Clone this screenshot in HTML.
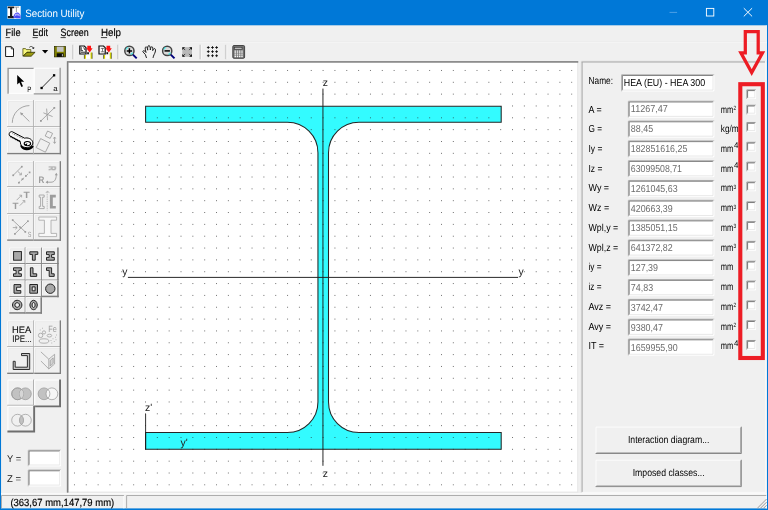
<!DOCTYPE html>
<html><head><meta charset="utf-8"><title>Section Utility</title>
<style>
html,body{margin:0;padding:0;background:#f0f0f0;overflow:hidden}
body{width:768px;height:510px;font-family:"Liberation Sans",sans-serif}
svg{display:block;position:absolute;left:0;top:0}
text{font-family:"Liberation Sans",sans-serif;white-space:pre;text-rendering:geometricPrecision}
</style></head><body>
<svg width="768" height="510" viewBox="0 0 768 510">
<defs><filter id="nf" color-interpolation-filters="sRGB"><feOffset dx="0" dy="0"/></filter></defs>

<rect x="0" y="0" width="768" height="510" fill="#0078d7"/>
<rect x="1.05" y="25.3" width="765.75" height="483.1" fill="#f0f0f0"/>
<!-- title bar -->
<g>
<rect x="7.4" y="6" width="13.3" height="12.8" fill="#fff"/>
<path d="M7.8 6.5h6.4v1.8h-2v7.7h2v2.2h-6.4v-2.2h2.2v-7.7h-2.2z" fill="#1c1c1c"/>
<path d="M14.4 7.1h4.6" stroke="#9a9a9a" stroke-width="1"/>
<path d="M16.4 7.1v5" stroke="#9a9a9a" stroke-width="1"/>
<path d="M13 17.4c0.8-3.4 3.4-5.6 5.4-4.6c1.2 0.7 2.3 2.2 2.3 4.2v1.2h-4z" fill="#4a4af5"/>
<path d="M14.2 16.6c1.2-1.8 3.2-2.4 5.4-0.8M15 14.8c1.6-1.2 3.4-0.8 4.8 0.4" stroke="#fff" stroke-width="0.55" fill="none"/>
</g>
<g filter="url(#nf)"><text x="25.2" y="16.8" font-size="10.6" fill="#fff" textLength="59.3" lengthAdjust="spacingAndGlyphs" >Section Utility</text></g>
<path d="M669.5 12.4h7.6" stroke="#4d9fe6" stroke-width="1"/>
<rect x="706.4" y="8.4" width="7.4" height="7.6" fill="none" stroke="#fff" stroke-width="0.9"/>
<path d="M743.8 8.2l8.3 8.2M752.1 8.2l-8.3 8.2" stroke="#fff" stroke-width="0.95" fill="none"/>
<!-- menu -->
<g filter="url(#nf)"><text x="5.6" y="36.2" font-size="10.6" fill="#000" textLength="15.0" lengthAdjust="spacingAndGlyphs" stroke="#000" stroke-width="0.18">File</text></g>
<path d="M5.6 37.6h4.3" stroke="#000" stroke-width="0.75"/>
<g filter="url(#nf)"><text x="32.6" y="36.2" font-size="10.6" fill="#000" textLength="15.4" lengthAdjust="spacingAndGlyphs" stroke="#000" stroke-width="0.18">Edit</text></g>
<path d="M32.6 37.6h5.2" stroke="#000" stroke-width="0.75"/>
<g filter="url(#nf)"><text x="60.6" y="36.2" font-size="10.6" fill="#000" textLength="28.1" lengthAdjust="spacingAndGlyphs" stroke="#000" stroke-width="0.18">Screen</text></g>
<path d="M60.6 37.6h5.2" stroke="#000" stroke-width="0.75"/>
<g filter="url(#nf)"><text x="100.9" y="36.2" font-size="10.6" fill="#000" textLength="20.1" lengthAdjust="spacingAndGlyphs" stroke="#000" stroke-width="0.18">Help</text></g>
<path d="M100.9 37.6h6.2" stroke="#000" stroke-width="0.75"/>
<path d="M1 42.6H766.8" stroke="#fbfbfb" stroke-width="0.9"/>
<path d="M1 41.9H766.8" stroke="#e9e9e9" stroke-width="0.6"/>
<!-- toolbar -->
<path d="M5.6 46.7H11.3L13.5 48.9V56.5H5.6z" fill="#fff" stroke="#111" stroke-width="0.95" stroke-linejoin="miter"/><path d="M11.3 46.7V48.9H13.5" fill="none" stroke="#111" stroke-width="0.8"/><path d="M22.9 56V48.6H25.5L26.3 49.6H30.8V52.3H27z" fill="#f7f77c" stroke="#3a3a00" stroke-width="0.7" stroke-linejoin="round"/><path d="M23.2 56.2L27 52.3H35.1L31.2 56.2z" fill="#9a9a10" stroke="#2c2c00" stroke-width="0.8" stroke-linejoin="round"/><path d="M29.3 47.4C30.6 45.9 32.6 46.2 33.6 48.3" fill="none" stroke="#222" stroke-width="0.8"/><path d="M34.4 46.9L33.9 49.1L31.9 48.3z" fill="#222"/><path d="M42 50.1H48.2L45.1 53.5z" fill="#000"/><rect x="54.4" y="46.4" width="11.2" height="10.5" fill="#808000" stroke="#2a2a00" stroke-width="0.7"/><rect x="56.8" y="46.7" width="6.8" height="5.1" fill="#c4c4c4"/><rect x="56.8" y="53.3" width="6.8" height="3.6" fill="#0a0a0a"/><rect x="61.9" y="54.1" width="0.9" height="2.2" fill="#d0d0d0"/><g transform="translate(0,0)"><path d="M85 55.2H91.6V58.8H85z" fill="#fff"/><path d="M85.25 55V58.8M91.25 52.6V58.8" stroke="#e2e200" stroke-width="1.4"/><path d="M84.4 55V58.8M92.1 52.6V58.8" stroke="#33330a" stroke-width="0.7"/><path d="M79.8 46H84.3L86 47.7V54H79.8z" fill="#fff" stroke="#0c0c0c" stroke-width="1.2" stroke-linejoin="miter"/><path d="M81.2 47.2v3.4h1.8M83.6 47.4l1.4 2.6" stroke="#222" stroke-width="0.9" fill="none"/><path d="M81 52.2h4.4" stroke="#111" stroke-width="0.9"/><path d="M87.3 45.8H91V48.3H92.6L89.7 52.6L86.3 48.3H87.3z" fill="#ff1212"/><path d="M87.2 52.2H88.9V54.2H87.2z" fill="#111"/></g><g transform="translate(19.2,0)"><path d="M85 55.2H91.6V58.8H85z" fill="#fff"/><path d="M85.25 55V58.8M91.25 52.6V58.8" stroke="#e2e200" stroke-width="1.4"/><path d="M84.4 55V58.8M92.1 52.6V58.8" stroke="#33330a" stroke-width="0.7"/><path d="M79.8 46H84.3L86 47.7V54H79.8z" fill="#fff" stroke="#0c0c0c" stroke-width="1.2" stroke-linejoin="miter"/><path d="M81.6 48.4h3.4M83.3 48.4v3.2M81.6 51.8h3.4" stroke="#444" stroke-width="0.7" fill="none"/><path d="M87.3 45.8H91V48.3H92.6L89.7 52.6L86.3 48.3H87.3z" fill="#ff1212"/><path d="M87.2 52.2H88.9V54.2H87.2z" fill="#111"/></g><path d="M132.70000000000002 54.4L136.70000000000002 58.4" stroke="#00007a" stroke-width="1.9" stroke-linecap="butt"/><circle cx="129.4" cy="50.9" r="4.6" fill="#dadada" stroke="#444" stroke-width="1.5"/><path d="M126.0 49.4A3.6 3.6 0 0 1 128.20000000000002 47.5" stroke="#48ecec" stroke-width="1.25" fill="none"/><path d="M132.70000000000002 52.6A3.6 3.6 0 0 1 130.6 54.4" stroke="#48ecec" stroke-width="1.25" fill="none"/><path d="M126.7 50.9H132.1M129.4 48.2V53.6" stroke="#000" stroke-width="1.45"/><path d="M170.5 54.4L174.5 58.4" stroke="#00007a" stroke-width="1.9" stroke-linecap="butt"/><circle cx="167.2" cy="50.9" r="4.6" fill="#dadada" stroke="#444" stroke-width="1.5"/><path d="M163.79999999999998 49.4A3.6 3.6 0 0 1 166.0 47.5" stroke="#48ecec" stroke-width="1.25" fill="none"/><path d="M170.5 52.6A3.6 3.6 0 0 1 168.39999999999998 54.4" stroke="#48ecec" stroke-width="1.25" fill="none"/><path d="M164.5 50.9H169.89999999999998" stroke="#000" stroke-width="1.5"/><path d="M146.4 57.6L145.3 54.4C144.4 53.2 143.2 52.6 142.8 51.6C142.9 50.5 144.1 50.4 144.9 51.2L146 52.5L145.3 49.2C144.9 47.6 145.6 46.5 146.5 46.9C147.2 47.3 147.4 48.6 147.7 50.2C147.5 48.2 147.6 45.6 148.9 45.5C150.1 45.5 150.3 47.8 150.3 50C150.6 48 151 46.5 152 46.7C153 47 152.9 48.8 152.7 50.6C153.3 49.2 154 48.2 154.8 48.6C155.7 49.2 155.6 50.6 155.2 52C154.7 53.8 153.4 55.4 153.1 57.5" fill="#f3f3f3" stroke="#1c1c1c" stroke-width="1" stroke-linejoin="round" stroke-linecap="round"/><rect x="182.3" y="47.2" width="9.7" height="9.6" fill="#b9b9b9"/><path d="M182.3 47.2h2.8l-2.8 2.8zM192 47.2v2.8l-2.8-2.8zM182.3 56.8v-2.8l2.8 2.8zM192 56.8h-2.8l2.8-2.8z" fill="#111"/><path d="M183 47.9l2.2 2.2M191.3 47.9l-2.2 2.2M183 56.1l2.2-2.2M191.3 56.1l-2.2-2.2" stroke="#222" stroke-width="0.8"/><path d="M206.90 47.5h2.8M208.3 46.10v2.8M206.90 51.6h2.8M208.3 50.20v2.8M206.90 55.7h2.8M208.3 54.30v2.8M211.10 47.5h2.8M212.5 46.10v2.8M211.10 51.6h2.8M212.5 50.20v2.8M211.10 55.7h2.8M212.5 54.30v2.8M215.20 47.5h2.8M216.6 46.10v2.8M215.20 51.6h2.8M216.6 50.20v2.8M215.20 55.7h2.8M216.6 54.30v2.8" stroke="#000" stroke-width="0.8"/><rect x="232.8" y="45.5" width="11.8" height="12.8" rx="1.2" fill="#707070" stroke="#3a3a3a" stroke-width="0.9"/><rect x="234.6" y="47.4" width="7.4" height="1.8" fill="#c4c4c4" stroke="#2a2a2a" stroke-width="0.5"/><path d="M234.50 50.50h1.5v1.2h-1.5zM234.50 52.35h1.5v1.2h-1.5zM234.50 54.20h1.5v1.2h-1.5zM234.50 56.05h1.5v1.2h-1.5zM236.75 50.50h1.5v1.2h-1.5zM236.75 52.35h1.5v1.2h-1.5zM236.75 54.20h1.5v1.2h-1.5zM236.75 56.05h1.5v1.2h-1.5zM239.00 50.50h1.5v1.2h-1.5zM239.00 52.35h1.5v1.2h-1.5zM239.00 54.20h1.5v1.2h-1.5zM239.00 56.05h1.5v1.2h-1.5zM241.25 50.50h1.5v1.2h-1.5zM241.25 52.35h1.5v1.2h-1.5zM241.25 54.20h1.5v1.2h-1.5zM241.25 56.05h1.5v1.2h-1.5z" fill="#f4f4f4"/>
<path d="M72.8 44.8v14.4" stroke="#d0d0d0" stroke-width="1.6"/><path d="M73.95 44.8v14.4" stroke="#fafafa" stroke-width="0.7"/>
<path d="M117.8 44.8v14.4" stroke="#d0d0d0" stroke-width="1.6"/><path d="M118.95 44.8v14.4" stroke="#fafafa" stroke-width="0.7"/>
<path d="M200.2 44.8v14.4" stroke="#d0d0d0" stroke-width="1.6"/><path d="M201.35 44.8v14.4" stroke="#fafafa" stroke-width="0.7"/>
<path d="M225.7 44.8v14.4" stroke="#d0d0d0" stroke-width="1.6"/><path d="M226.85 44.8v14.4" stroke="#fafafa" stroke-width="0.7"/>
<!-- canvas -->
<rect x="66.9" y="61.2" width="511.30" height="431.40" fill="#e6e6e6"/>
<path d="M66.9 492.6V61.2H578.2V62.9H68.8V492.6z" fill="#a4a4a4"/>
<path d="M66.9 492.6V61.2H578.2V62.25H68.0V492.6z" fill="#808080"/>
<rect x="68.8" y="62.9" width="508.40000000000003" height="428.70000000000005" fill="#fff"/>
<path d="M145.60 106.15H501.20V122.30H359.00A30.50 30.50 0 0 0 328.50 152.80V402.05A30.50 30.50 0 0 0 359.00 432.55H501.20V449.30H145.60V432.55H287.45A30.50 30.50 0 0 0 317.95 402.05V152.80A30.50 30.50 0 0 0 287.45 122.30H145.60z" fill="#33fbff"/>
<defs><pattern id="dots" x="73.95" y="69.95" width="11.84" height="11.84" patternUnits="userSpaceOnUse"><rect x="0" y="0" width="0.9" height="0.9" fill="#222" opacity="0.8"/></pattern></defs>
<defs><clipPath id="dc"><path clip-rule="evenodd" d="M0 0H768V510H0zM144.6 105H502.2V107H144.6zM499.8 106.15H502V122.3H499.8zM499.8 432.55H502V449.3H499.8z"/></clipPath></defs>
<rect x="73.4" y="69.4" width="499.28" height="416.40" fill="url(#dots)" clip-path="url(#dc)"/>
<path d="M145.60 106.15H501.20V122.30H359.00A30.50 30.50 0 0 0 328.50 152.80V402.05A30.50 30.50 0 0 0 359.00 432.55H501.20V449.30H145.60V432.55H287.45A30.50 30.50 0 0 0 317.95 402.05V152.80A30.50 30.50 0 0 0 287.45 122.30H145.60z" fill="none" stroke="#262626" stroke-width="1.05"/>
<path d="M127.9 277.4H518.1M322.95 88.6V465.8" stroke="#1c1c1c" stroke-width="0.95" fill="none"/>
<path d="M145.60 413.9V449.30" stroke="#1c1c1c" stroke-width="0.9" fill="none"/>
<g filter="url(#nf)"><text x="122.3" y="274.6" font-size="10.4" fill="#222" >y</text></g>
<g filter="url(#nf)"><text x="518.4" y="274.6" font-size="10.4" fill="#222" >y</text></g>
<g filter="url(#nf)"><text x="322.7" y="85.7" font-size="10.4" fill="#222" >z</text></g>
<g filter="url(#nf)"><text x="322.7" y="476.7" font-size="10.4" fill="#222" >z</text></g>
<g filter="url(#nf)"><text x="145.0" y="410.8" font-size="10.4" fill="#222" >z'</text></g>
<g filter="url(#nf)"><text x="180.6" y="446.2" font-size="10.4" fill="#222" >y'</text></g>
<!-- left panel -->
<rect x="7.40" y="67.70" width="26.40" height="26.10" fill="#f8f8f8"/><path d="M8.10 93.80V68.40H33.80" fill="none" stroke="#969696" stroke-width="1.4"/><path d="M8.80 93.30H33.30V69.10" fill="none" stroke="#ffffff" stroke-width="1"/><rect x="33.80" y="67.70" width="27.00" height="26.90" fill="#f0f0f0"/><path d="M34.30 94.10V68.20H60.30" fill="none" stroke="#ffffff" stroke-width="1"/><path d="M33.80 93.95H60.15V67.70" fill="none" stroke="#969696" stroke-width="1.3"/><path d="M17.2 74.9V84.5L19.4 82.4L21.4 87L23 86.3L21 81.8H24.2z" fill="#000"/><g filter="url(#nf)"><text x="27.3" y="92" font-size="7.8" fill="#000" textLength="4.1" lengthAdjust="spacingAndGlyphs" >P</text></g><path d="M41.6 88L54.1 75.3" stroke="#1a1a1a" stroke-width="0.9"/><rect x="40.45" y="86.85" width="2.3" height="2.3" fill="#000"/><rect x="52.95" y="74.15" width="2.3" height="2.3" fill="#000"/><g filter="url(#nf)"><text x="53.2" y="90.9" font-size="7.4" fill="#000" textLength="4.4" lengthAdjust="spacingAndGlyphs" >a</text></g><rect x="7.20" y="100.20" width="26.75" height="26.95" fill="#f0f0f0"/><path d="M7.65 126.20V100.65H33.00" fill="none" stroke="#fbfbfb" stroke-width="0.9"/><path d="M8.50 126.20V101.50H33.00" fill="none" stroke="#e9e9e9" stroke-width="0.8"/><path d="M7.20 126.68H33.95" fill="none" stroke="#ababab" stroke-width="0.95"/><path d="M33.48 100.20V127.15" fill="none" stroke="#ababab" stroke-width="0.95"/><rect x="33.95" y="100.20" width="27.05" height="26.95" fill="#f0f0f0"/><path d="M34.40 126.20V100.65H59.65" fill="none" stroke="#fbfbfb" stroke-width="0.9"/><path d="M35.25 126.20V101.50H59.65" fill="none" stroke="#e9e9e9" stroke-width="0.8"/><path d="M33.95 126.68H61.00" fill="none" stroke="#ababab" stroke-width="0.95"/><path d="M60.33 100.20V127.15" fill="none" stroke="#7e7e7e" stroke-width="1.35"/><rect x="7.20" y="127.15" width="26.75" height="27.10" fill="#f0f0f0"/><path d="M7.65 152.90V127.60H33.00" fill="none" stroke="#fbfbfb" stroke-width="0.9"/><path d="M8.50 152.90V128.45H33.00" fill="none" stroke="#e9e9e9" stroke-width="0.8"/><path d="M7.20 153.57H33.95" fill="none" stroke="#7e7e7e" stroke-width="1.35"/><path d="M33.48 127.15V154.25" fill="none" stroke="#ababab" stroke-width="0.95"/><rect x="33.95" y="127.15" width="27.05" height="27.10" fill="#f0f0f0"/><path d="M34.40 152.90V127.60H59.65" fill="none" stroke="#fbfbfb" stroke-width="0.9"/><path d="M35.25 152.90V128.45H59.65" fill="none" stroke="#e9e9e9" stroke-width="0.8"/><path d="M33.95 153.57H61.00" fill="none" stroke="#7e7e7e" stroke-width="1.35"/><path d="M60.33 127.15V154.25" fill="none" stroke="#7e7e7e" stroke-width="1.35"/><path d="M12.3 122.8A17.2 17.2 0 0 1 29.4 105.6" fill="none" stroke="#9c9c9c" stroke-width="0.9"/><path d="M29.4 121.5L20.6 112.8" stroke="#9c9c9c" stroke-width="0.9"/><path d="M20.2 112.4L23.4 113.2L21 115.6z" fill="#9c9c9c"/><path d="M40.9 120.9L54.3 107.9M46.6 108.6L47.6 120.2M43.4 112.8L52.6 116.6" stroke="#9c9c9c" stroke-width="0.85" fill="none"/><rect x="40.00" y="120.00" width="1.8" height="1.8" fill="#9c9c9c"/><rect x="53.40" y="107.00" width="1.8" height="1.8" fill="#9c9c9c"/><g><path d="M21.2 145.2C22.4 149.6 29.6 150.6 32.8 145.8" fill="none" stroke="#000" stroke-width="2.4"/><path d="M12.4 131.8C10.4 130.9 8.2 133.6 9.6 135.8L20.4 141.6C20.2 143.4 20.8 145 22.2 146.2C25 148.4 30.2 148 32.2 145C33.6 142.6 32.4 139.8 29.6 138.6C27.8 137.8 26 137.8 24.6 138.2z" fill="#fafafa" stroke="#000" stroke-width="1" stroke-linejoin="round"/><path d="M10.4 136.4L20.4 141.8" stroke="#000" stroke-width="1.5" stroke-dasharray="1.3 0.6"/><path d="M12.4 133.6L22.6 138.6" stroke="#000" stroke-width="0.5" stroke-dasharray="1 0.8"/><ellipse cx="27.4" cy="143.6" rx="3.2" ry="2.1" fill="#fff" stroke="#000" stroke-width="1.1"/><path d="M24.6 144.6L27.4 143.2L26.8 145.4z" fill="#000"/></g><g fill="none" stroke="#9c9c9c" stroke-width="0.85"><path d="M40.6 138.6L49.8 143.2L45.4 152.2L36.2 147.6z"/><path d="M47.6 131L52.6 133.4L50.2 138.4L45.2 136z"/><path d="M54.6 137.2V143.2M53.4 138.6L54.6 137L55.8 138.6M53.4 141.8L54.6 143.4L55.8 141.8"/></g><rect x="7.20" y="161.20" width="26.75" height="25.90" fill="#f0f0f0"/><path d="M7.65 186.15V161.65H33.00" fill="none" stroke="#fbfbfb" stroke-width="0.9"/><path d="M8.50 186.15V162.50H33.00" fill="none" stroke="#e9e9e9" stroke-width="0.8"/><path d="M7.20 186.62H33.95" fill="none" stroke="#ababab" stroke-width="0.95"/><path d="M33.48 161.20V187.10" fill="none" stroke="#ababab" stroke-width="0.95"/><rect x="33.95" y="161.20" width="27.05" height="25.90" fill="#f0f0f0"/><path d="M34.40 186.15V161.65H59.65" fill="none" stroke="#fbfbfb" stroke-width="0.9"/><path d="M35.25 186.15V162.50H59.65" fill="none" stroke="#e9e9e9" stroke-width="0.8"/><path d="M33.95 186.62H61.00" fill="none" stroke="#ababab" stroke-width="0.95"/><path d="M60.33 161.20V187.10" fill="none" stroke="#7e7e7e" stroke-width="1.35"/><rect x="7.20" y="187.10" width="26.75" height="27.00" fill="#f0f0f0"/><path d="M7.65 213.15V187.55H33.00" fill="none" stroke="#fbfbfb" stroke-width="0.9"/><path d="M8.50 213.15V188.40H33.00" fill="none" stroke="#e9e9e9" stroke-width="0.8"/><path d="M7.20 213.62H33.95" fill="none" stroke="#ababab" stroke-width="0.95"/><path d="M33.48 187.10V214.10" fill="none" stroke="#ababab" stroke-width="0.95"/><rect x="33.95" y="187.10" width="27.05" height="27.00" fill="#f0f0f0"/><path d="M34.40 213.15V187.55H59.65" fill="none" stroke="#fbfbfb" stroke-width="0.9"/><path d="M35.25 213.15V188.40H59.65" fill="none" stroke="#e9e9e9" stroke-width="0.8"/><path d="M33.95 213.62H61.00" fill="none" stroke="#ababab" stroke-width="0.95"/><path d="M60.33 187.10V214.10" fill="none" stroke="#7e7e7e" stroke-width="1.35"/><rect x="7.20" y="214.10" width="26.75" height="26.70" fill="#f0f0f0"/><path d="M7.65 239.45V214.55H33.00" fill="none" stroke="#fbfbfb" stroke-width="0.9"/><path d="M8.50 239.45V215.40H33.00" fill="none" stroke="#e9e9e9" stroke-width="0.8"/><path d="M7.20 240.12H33.95" fill="none" stroke="#7e7e7e" stroke-width="1.35"/><path d="M33.48 214.10V240.80" fill="none" stroke="#ababab" stroke-width="0.95"/><rect x="33.95" y="214.10" width="27.05" height="26.70" fill="#f0f0f0"/><path d="M34.40 239.45V214.55H59.65" fill="none" stroke="#fbfbfb" stroke-width="0.9"/><path d="M35.25 239.45V215.40H59.65" fill="none" stroke="#e9e9e9" stroke-width="0.8"/><path d="M33.95 240.12H61.00" fill="none" stroke="#7e7e7e" stroke-width="1.35"/><path d="M60.33 214.10V240.80" fill="none" stroke="#7e7e7e" stroke-width="1.35"/><path d="M13.2 175.3L21.8 166.7" stroke="#9c9c9c" stroke-width="0.85"/><rect x="12.35" y="174.45" width="1.7" height="1.7" fill="#9c9c9c"/><rect x="20.95" y="165.85" width="1.7" height="1.7" fill="#9c9c9c"/><path d="M18.9 182.7L29.6 172.4" stroke="#9c9c9c" stroke-width="0.85" stroke-dasharray="1.6 1.2"/><rect x="18.05" y="181.85" width="1.7" height="1.7" fill="#9c9c9c"/><rect x="21.65" y="178.35" width="1.7" height="1.7" fill="#9c9c9c"/><rect x="25.15" y="174.95" width="1.7" height="1.7" fill="#9c9c9c"/><rect x="28.75" y="171.55" width="1.7" height="1.7" fill="#9c9c9c"/><path d="M17.8 171.4L21.2 174.6M21.4 172.6V174.8H19.2" stroke="#9c9c9c" stroke-width="0.8" fill="none"/><g filter="url(#nf)"><text x="38.4" y="183.2" font-size="9.6" fill="#9c9c9c" textLength="5.8" lengthAdjust="spacingAndGlyphs" font-weight="bold">R</text></g><g transform="translate(48.6,166.2) rotate(90)"><g filter="url(#nf)"><text x="0" y="0" font-size="10.4" fill="#9c9c9c" textLength="4.5" lengthAdjust="spacingAndGlyphs" font-weight="bold">R</text></g></g><path d="M46.6 182.2H51C54.4 182.2 56.3 179.6 56.3 174.4" fill="none" stroke="#9c9c9c" stroke-width="0.9"/><path d="M45.6 182.2L48 180.6V183.8zM56.3 172.8L54.8 175.2H57.8z" fill="#9c9c9c"/><g filter="url(#nf)"><text x="12.5" y="209.2" font-size="9.2" fill="#9c9c9c" textLength="6" lengthAdjust="spacingAndGlyphs" font-weight="bold">T</text></g><g filter="url(#nf)"><text x="23.4" y="198.3" font-size="9.2" fill="#9c9c9c" textLength="6.2" lengthAdjust="spacingAndGlyphs" font-weight="bold">T</text></g><path d="M16.6 200.2L21.4 195.4M19.4 195.2H21.6V197.4M19.8 205.6L24.6 200.8M22.6 200.6H24.8V202.8" fill="none" stroke="#9c9c9c" stroke-width="0.8"/><path d="M39.2 195H44.2V197.2H42.6V206.4H44.2V208.6H39.2V206.4H40.6V197.2H39.2z" fill="none" stroke="#9c9c9c" stroke-width="0.8"/><path d="M49.9 194.8H55.8V197.4H52.8V206H55.8V208.6H49.9z" fill="#9c9c9c"/><path d="M47.2 192V210.4" stroke="#9c9c9c" stroke-width="0.7" stroke-dasharray="1 0.8"/><path d="M46 192.8L47.2 191.2L49.4 192.6" stroke="#9c9c9c" stroke-width="0.7" fill="none"/><path d="M12.7 220.1L25.3 231.9M14.9 233.9L27.9 221.2" stroke="#9c9c9c" stroke-width="0.85"/><rect x="11.85" y="219.25" width="1.7" height="1.7" fill="#9c9c9c"/><rect x="24.45" y="231.05" width="1.7" height="1.7" fill="#9c9c9c"/><rect x="14.05" y="233.05" width="1.7" height="1.7" fill="#9c9c9c"/><rect x="27.05" y="220.35" width="1.7" height="1.7" fill="#9c9c9c"/><rect x="19.35" y="226.55" width="1.7" height="1.7" fill="#9c9c9c"/><path d="M12.8 227.6H17M15.4 226L17.2 227.6L15.4 229.2" stroke="#9c9c9c" stroke-width="0.8" fill="none"/><g filter="url(#nf)"><text x="27.8" y="237.4" font-size="7.6" fill="#9c9c9c" textLength="3.6" lengthAdjust="spacingAndGlyphs" >S</text></g><path d="M38.8 217H56.6V220.2H51V233.4H56.6V236.6H38.8V233.4H44.4V220.2H38.8z" fill="#f7f7f7" stroke="#a6a6a6" stroke-width="0.8"/><rect x="9.30" y="247.60" width="16.40" height="16.50" fill="#f0f0f0"/><path d="M9.75 263.05V248.05H24.65" fill="none" stroke="#fbfbfb" stroke-width="0.9"/><path d="M10.60 263.05V248.90H24.65" fill="none" stroke="#e9e9e9" stroke-width="0.8"/><path d="M9.30 263.58H25.70" fill="none" stroke="#868686" stroke-width="1.05"/><path d="M25.18 247.60V264.10" fill="none" stroke="#868686" stroke-width="1.05"/><rect x="25.70" y="247.60" width="16.30" height="16.50" fill="#f0f0f0"/><path d="M26.15 263.05V248.05H40.95" fill="none" stroke="#fbfbfb" stroke-width="0.9"/><path d="M27.00 263.05V248.90H40.95" fill="none" stroke="#e9e9e9" stroke-width="0.8"/><path d="M25.70 263.58H42.00" fill="none" stroke="#868686" stroke-width="1.05"/><path d="M41.48 247.60V264.10" fill="none" stroke="#868686" stroke-width="1.05"/><rect x="42.00" y="247.60" width="16.70" height="16.50" fill="#f0f0f0"/><path d="M42.45 263.05V248.05H57.15" fill="none" stroke="#fbfbfb" stroke-width="0.9"/><path d="M43.30 263.05V248.90H57.15" fill="none" stroke="#e9e9e9" stroke-width="0.8"/><path d="M42.00 263.58H58.70" fill="none" stroke="#868686" stroke-width="1.05"/><path d="M57.93 247.60V264.10" fill="none" stroke="#7e7e7e" stroke-width="1.55"/><rect x="9.30" y="264.10" width="16.40" height="16.50" fill="#f0f0f0"/><path d="M9.75 279.55V264.55H24.65" fill="none" stroke="#fbfbfb" stroke-width="0.9"/><path d="M10.60 279.55V265.40H24.65" fill="none" stroke="#e9e9e9" stroke-width="0.8"/><path d="M9.30 280.08H25.70" fill="none" stroke="#868686" stroke-width="1.05"/><path d="M25.18 264.10V280.60" fill="none" stroke="#868686" stroke-width="1.05"/><rect x="25.70" y="264.10" width="16.30" height="16.50" fill="#f0f0f0"/><path d="M26.15 279.55V264.55H40.95" fill="none" stroke="#fbfbfb" stroke-width="0.9"/><path d="M27.00 279.55V265.40H40.95" fill="none" stroke="#e9e9e9" stroke-width="0.8"/><path d="M25.70 280.08H42.00" fill="none" stroke="#868686" stroke-width="1.05"/><path d="M41.48 264.10V280.60" fill="none" stroke="#868686" stroke-width="1.05"/><rect x="42.00" y="264.10" width="16.70" height="16.50" fill="#f0f0f0"/><path d="M42.45 279.55V264.55H57.15" fill="none" stroke="#fbfbfb" stroke-width="0.9"/><path d="M43.30 279.55V265.40H57.15" fill="none" stroke="#e9e9e9" stroke-width="0.8"/><path d="M42.00 280.08H58.70" fill="none" stroke="#868686" stroke-width="1.05"/><path d="M57.93 264.10V280.60" fill="none" stroke="#7e7e7e" stroke-width="1.55"/><rect x="9.30" y="280.60" width="16.40" height="16.60" fill="#f0f0f0"/><path d="M9.75 296.15V281.05H24.65" fill="none" stroke="#fbfbfb" stroke-width="0.9"/><path d="M10.60 296.15V281.90H24.65" fill="none" stroke="#e9e9e9" stroke-width="0.8"/><path d="M9.30 296.68H25.70" fill="none" stroke="#868686" stroke-width="1.05"/><path d="M25.18 280.60V297.20" fill="none" stroke="#868686" stroke-width="1.05"/><rect x="25.70" y="280.60" width="16.30" height="16.60" fill="#f0f0f0"/><path d="M26.15 296.15V281.05H40.95" fill="none" stroke="#fbfbfb" stroke-width="0.9"/><path d="M27.00 296.15V281.90H40.95" fill="none" stroke="#e9e9e9" stroke-width="0.8"/><path d="M25.70 296.68H42.00" fill="none" stroke="#868686" stroke-width="1.05"/><path d="M41.48 280.60V297.20" fill="none" stroke="#868686" stroke-width="1.05"/><rect x="42.00" y="280.60" width="16.70" height="16.60" fill="#f0f0f0"/><path d="M42.45 295.65V281.05H57.15" fill="none" stroke="#fbfbfb" stroke-width="0.9"/><path d="M43.30 295.65V281.90H57.15" fill="none" stroke="#e9e9e9" stroke-width="0.8"/><path d="M42.00 296.43H58.70" fill="none" stroke="#7e7e7e" stroke-width="1.55"/><path d="M57.93 280.60V297.20" fill="none" stroke="#7e7e7e" stroke-width="1.55"/><rect x="9.30" y="297.20" width="16.40" height="16.50" fill="#f0f0f0"/><path d="M9.75 312.15V297.65H24.65" fill="none" stroke="#fbfbfb" stroke-width="0.9"/><path d="M10.60 312.15V298.50H24.65" fill="none" stroke="#e9e9e9" stroke-width="0.8"/><path d="M9.30 312.93H25.70" fill="none" stroke="#7e7e7e" stroke-width="1.55"/><path d="M25.18 297.20V313.70" fill="none" stroke="#868686" stroke-width="1.05"/><rect x="25.70" y="297.20" width="16.30" height="16.50" fill="#f0f0f0"/><path d="M26.15 312.15V297.65H40.45" fill="none" stroke="#fbfbfb" stroke-width="0.9"/><path d="M27.00 312.15V298.50H40.45" fill="none" stroke="#e9e9e9" stroke-width="0.8"/><path d="M25.70 312.93H42.00" fill="none" stroke="#7e7e7e" stroke-width="1.55"/><path d="M41.23 297.20V313.70" fill="none" stroke="#7e7e7e" stroke-width="1.55"/><rect x="13.6" y="251.6" width="7.8" height="8.6" fill="#a8a8a8" stroke="#1c1c1c" stroke-width="0.95" stroke-linejoin="miter"/><path d="M29.8 251.8H37.8V254.4H35.2V260.2H32.4V254.4H29.8z" fill="#a8a8a8" stroke="#1c1c1c" stroke-width="0.95" stroke-linejoin="miter"/><path d="M46.5 251.8H54.3V254.6H51.6V257.4H54.3V260.2H46.5V257.4H49.2V254.6H46.5z" fill="#a8a8a8" stroke="#1c1c1c" stroke-width="0.95" stroke-linejoin="miter"/><path d="M13.5 267.8H21.4V270.4H18.8V273.8H21.4V276.4H13.5V273.8H16.1V270.4H13.5z" fill="#a8a8a8" stroke="#1c1c1c" stroke-width="0.95" stroke-linejoin="miter"/><path d="M30.4 267.8H33V273.8H36.7V276.4H30.4z" fill="#a8a8a8" stroke="#1c1c1c" stroke-width="0.95" stroke-linejoin="miter"/><path d="M46.5 267.8H51.6V273.8H54.2V276.4H49.2V270.4H46.5z" fill="#a8a8a8" stroke="#1c1c1c" stroke-width="0.95" stroke-linejoin="miter"/><path d="M14 284.6H20.8V287.2H16.6V290.6H20.8V293.2H14z" fill="#a8a8a8" stroke="#1c1c1c" stroke-width="0.95" stroke-linejoin="miter"/><path d="M29.8 284.5H37.5V293.2H29.8zM32.2 286.9V290.8H35.1V286.9z" fill-rule="evenodd" fill="#a8a8a8" stroke="#1c1c1c" stroke-width="0.95" stroke-linejoin="miter"/><circle cx="50.3" cy="288.7" r="4.7" fill="#a8a8a8" stroke="#1c1c1c" stroke-width="0.95" stroke-linejoin="miter"/><path d="M17.2 300.3A4.7 4.7 0 1 0 17.21 300.3zM17.2 302.7A2.3 2.3 0 1 1 17.19 302.7z" fill-rule="evenodd" fill="#a8a8a8" stroke="#1c1c1c" stroke-width="0.95" stroke-linejoin="miter"/><path d="M33.6 300.3A3.7 4.7 0 1 0 33.61 300.3zM33.6 302.5A1.5 2.5 0 1 1 33.59 302.5z" fill-rule="evenodd" fill="#a8a8a8" stroke="#1c1c1c" stroke-width="0.95" stroke-linejoin="miter"/><rect x="7.20" y="320.40" width="27.00" height="26.70" fill="#f0f0f0"/><path d="M7.65 346.15V320.85H33.25" fill="none" stroke="#fbfbfb" stroke-width="0.9"/><path d="M8.50 346.15V321.70H33.25" fill="none" stroke="#e9e9e9" stroke-width="0.8"/><path d="M7.20 346.62H34.20" fill="none" stroke="#ababab" stroke-width="0.95"/><path d="M33.73 320.40V347.10" fill="none" stroke="#ababab" stroke-width="0.95"/><rect x="34.20" y="320.40" width="26.80" height="26.70" fill="#f0f0f0"/><path d="M34.65 346.15V320.85H59.65" fill="none" stroke="#fbfbfb" stroke-width="0.9"/><path d="M35.50 346.15V321.70H59.65" fill="none" stroke="#e9e9e9" stroke-width="0.8"/><path d="M34.20 346.62H61.00" fill="none" stroke="#ababab" stroke-width="0.95"/><path d="M60.33 320.40V347.10" fill="none" stroke="#7e7e7e" stroke-width="1.35"/><rect x="7.20" y="347.10" width="27.00" height="26.90" fill="#f0f0f0"/><path d="M7.65 372.65V347.55H33.25" fill="none" stroke="#fbfbfb" stroke-width="0.9"/><path d="M8.50 372.65V348.40H33.25" fill="none" stroke="#e9e9e9" stroke-width="0.8"/><path d="M7.20 373.32H34.20" fill="none" stroke="#7e7e7e" stroke-width="1.35"/><path d="M33.73 347.10V374.00" fill="none" stroke="#ababab" stroke-width="0.95"/><rect x="34.20" y="347.10" width="26.80" height="26.90" fill="#f0f0f0"/><path d="M34.65 372.65V347.55H59.65" fill="none" stroke="#fbfbfb" stroke-width="0.9"/><path d="M35.50 372.65V348.40H59.65" fill="none" stroke="#e9e9e9" stroke-width="0.8"/><path d="M34.20 373.32H61.00" fill="none" stroke="#7e7e7e" stroke-width="1.35"/><path d="M60.33 347.10V374.00" fill="none" stroke="#7e7e7e" stroke-width="1.35"/><g filter="url(#nf)"><text x="12" y="333" font-size="9.6" fill="#111" textLength="19.2" lengthAdjust="spacingAndGlyphs" stroke="#111" stroke-width="0.12">HEA</text></g><g filter="url(#nf)"><text x="12.3" y="342.2" font-size="9.6" fill="#111" textLength="19.4" lengthAdjust="spacingAndGlyphs" stroke="#111" stroke-width="0.12">IPE...</text></g><g filter="url(#nf)"><text x="48.2" y="332.4" font-size="9.2" fill="#9c9c9c" textLength="8.6" lengthAdjust="spacingAndGlyphs" >Fe</text></g><g fill="none" stroke="#9c9c9c" stroke-width="0.75"><ellipse cx="44" cy="341" rx="4.9" ry="2.2"/><circle cx="40.6" cy="335.4" r="2.2"/><circle cx="44" cy="332.4" r="1.6"/><ellipse cx="49.4" cy="335.6" rx="2.3" ry="1.4"/></g><rect x="39.8" y="329.6" width="0.8" height="0.8" fill="#9c9c9c"/><rect x="42.2" y="327.8" width="0.8" height="0.8" fill="#9c9c9c"/><rect x="52.6" y="338.4" width="0.8" height="0.8" fill="#9c9c9c"/><rect x="55" y="336.8" width="0.8" height="0.8" fill="#9c9c9c"/><rect x="53.8" y="341.2" width="0.8" height="0.8" fill="#9c9c9c"/><rect x="51.4" y="342.6" width="0.8" height="0.8" fill="#9c9c9c"/><rect x="55.6" y="339.4" width="0.8" height="0.8" fill="#9c9c9c"/><rect x="50.6" y="340.2" width="0.8" height="0.8" fill="#9c9c9c"/><rect x="56" y="334.6" width="0.8" height="0.8" fill="#9c9c9c"/><path d="M21.5 353.5H29.7V369.5H13.2V361.3H15.2V367.2H27.4V355.6H21.5z" fill="#c6c6c6" stroke="#262626" stroke-width="0.95"/><g fill="none" stroke="#9c9c9c" stroke-width="0.8"><path d="M40.9 351.9L48.8 359.2M40.9 361L48.8 368.9M48.8 359.2V368.9M48.8 359.2L54.6 354.3V364L48.8 368.9"/><path d="M50.2 360.4L53.2 357.8V363.4L50.2 366z" fill="#d4d4d4"/></g><rect x="7.40" y="379.50" width="26.80" height="26.30" fill="#f0f0f0"/><path d="M7.90 405.30V380.00H33.70" fill="none" stroke="#ffffff" stroke-width="1"/><path d="M7.40 405.30H33.70V379.50" fill="none" stroke="#a4a4a4" stroke-width="1.0"/><rect x="34.20" y="379.50" width="26.80" height="27.80" fill="#f0f0f0"/><path d="M34.70 406.80V380.00H60.50" fill="none" stroke="#ffffff" stroke-width="1"/><path d="M34.20 406.35H60.05V379.50" fill="none" stroke="#6e6e6e" stroke-width="1.9"/><rect x="7.40" y="405.80" width="27.70" height="26.70" fill="#f0f0f0"/><path d="M7.90 432.00V406.30H34.60" fill="none" stroke="#ffffff" stroke-width="1"/><path d="M7.40 431.55H34.15V405.80" fill="none" stroke="#6e6e6e" stroke-width="1.9"/><circle cx="17.6" cy="393.8" r="5.9" fill="#c2c2c2" stroke="#969696" stroke-width="0.7"/><circle cx="25.4" cy="393.8" r="5.9" fill="#c2c2c2" stroke="#969696" stroke-width="0.7"/><circle cx="17.6" cy="393.8" r="5.9" fill="none" stroke="#969696" stroke-width="0.7"/><path d="M21.5 389.4A5.9 5.9 0 0 1 21.5 398.2A5.9 5.9 0 0 1 21.5 389.4z" fill="#d6d6d6"/><circle cx="44" cy="393.8" r="5.9" fill="#c2c2c2" stroke="#969696" stroke-width="0.7"/><circle cx="51.9" cy="393.8" r="5.9" fill="#f6f6f6" stroke="#969696" stroke-width="0.7"/><path d="M47.95 389.4A5.9 5.9 0 0 1 47.95 398.2" fill="none" stroke="#969696" stroke-width="0.7"/><circle cx="17.6" cy="420.2" r="5.9" fill="none" stroke="#969696" stroke-width="0.7"/><circle cx="25.4" cy="420.2" r="5.9" fill="none" stroke="#969696" stroke-width="0.7"/><path d="M21.5 415.8A5.9 5.9 0 0 1 21.5 424.6A5.9 5.9 0 0 1 21.5 415.8z" fill="#c2c2c2" stroke="#969696" stroke-width="0.5"/><g filter="url(#nf)"><text x="7.1" y="462.2" font-size="9.8" fill="#1a1a1a" textLength="14.1" lengthAdjust="spacingAndGlyphs" >Y =</text></g><g filter="url(#nf)"><text x="7.1" y="482" font-size="9.8" fill="#1a1a1a" textLength="14.1" lengthAdjust="spacingAndGlyphs" >Z =</text></g><rect x="27.9" y="449.8" width="33.00" height="16.40" fill="#fff"/><path d="M28.299999999999997 466.2V450.2H60.9" fill="none" stroke="#a0a0a0" stroke-width="0.8"/><path d="M29.099999999999998 465.4V451.0H60.1" fill="none" stroke="#696969" stroke-width="0.8"/><path d="M28.299999999999997 465.8H60.5V450.2" fill="none" stroke="#fff" stroke-width="0.8"/><path d="M29.099999999999998 465.0H59.699999999999996V451.0" fill="none" stroke="#e3e3e3" stroke-width="0.8"/><rect x="27.9" y="469.6" width="33.00" height="16.70" fill="#fff"/><path d="M28.299999999999997 486.3V470.0H60.9" fill="none" stroke="#a0a0a0" stroke-width="0.8"/><path d="M29.099999999999998 485.5V470.8H60.1" fill="none" stroke="#696969" stroke-width="0.8"/><path d="M28.299999999999997 485.90000000000003H60.5V470.0" fill="none" stroke="#fff" stroke-width="0.8"/><path d="M29.099999999999998 485.1H59.699999999999996V470.8" fill="none" stroke="#e3e3e3" stroke-width="0.8"/>
<!-- right panel -->
<path d="M582.0 492.4V61.9" fill="none" stroke="#b4b4b4" stroke-width="1.5"/>
<path d="M581.3 61.9H766.6" fill="none" stroke="#a6a6a6" stroke-width="1.4"/>
<path d="M581.1 492.4V61.0H765.6" fill="none" stroke="#e2e2e2" stroke-width="0.6"/>
<path d="M581.5 492.4H765.6V61.0" fill="none" stroke="#f9f9f9" stroke-width="1"/>
<g filter="url(#nf)"><text x="588.6" y="83.7" font-size="10.1" fill="#000" textLength="24.4" lengthAdjust="spacingAndGlyphs" >Name:</text></g>
<rect x="621.2" y="74.3" width="93.00" height="17.00" fill="#fff"/><path d="M621.6 91.3V74.7H714.2" fill="none" stroke="#a0a0a0" stroke-width="0.8"/><path d="M622.4000000000001 90.5V75.5H713.4000000000001" fill="none" stroke="#696969" stroke-width="0.8"/><path d="M621.6 90.89999999999999H713.8000000000001V74.7" fill="none" stroke="#fff" stroke-width="0.8"/><path d="M622.4000000000001 90.1H713.0V75.5" fill="none" stroke="#e3e3e3" stroke-width="0.8"/>
<g filter="url(#nf)"><text x="623.8" y="85.6" font-size="10.1" fill="#000" textLength="81.3" lengthAdjust="spacingAndGlyphs" >HEA (EU) - HEA 300</text></g>
<rect x="746.40" y="89.40" width="9.6" height="9.6" fill="#fff"/><path d="M746.80 99.00V89.80H756.00" fill="none" stroke="#8e8e8e" stroke-width="0.8"/><path d="M747.60 98.20V90.60H755.20" fill="none" stroke="#5c5c5c" stroke-width="0.8"/><path d="M746.80 98.60H755.60V89.80" fill="none" stroke="#fff" stroke-width="0.8"/><path d="M747.60 97.80H754.80V90.60" fill="none" stroke="#e3e3e3" stroke-width="0.8"/>
<g filter="url(#nf)"><text x="588.5" y="112.5" font-size="10.1" fill="#000" textLength="13.1" lengthAdjust="spacingAndGlyphs" >A =</text></g>
<rect x="628.0" y="100.8" width="86.20" height="16.80" fill="#fff"/><path d="M628.4 117.6V101.2H714.2" fill="none" stroke="#a0a0a0" stroke-width="0.8"/><path d="M629.2 116.8V102.0H713.4000000000001" fill="none" stroke="#696969" stroke-width="0.8"/><path d="M628.4 117.19999999999999H713.8000000000001V101.2" fill="none" stroke="#fff" stroke-width="0.8"/><path d="M629.2 116.39999999999999H713.0V102.0" fill="none" stroke="#e3e3e3" stroke-width="0.8"/>
<g filter="url(#nf)"><text x="630.8" y="112.35" font-size="10.1" fill="#6d6d6d" textLength="37.0" lengthAdjust="spacingAndGlyphs" >11267,47</text></g>
<g filter="url(#nf)"><text x="720.8" y="112.5" font-size="10.1" fill="#000" textLength="12.5" lengthAdjust="spacingAndGlyphs" >mm</text></g>
<g filter="url(#nf)"><text x="733.5" y="109.9" font-size="6.2" fill="#000" textLength="2.7" lengthAdjust="spacingAndGlyphs" >2</text></g>
<rect x="746.40" y="104.80" width="9.6" height="9.6" fill="#fff"/><path d="M746.80 114.40V105.20H756.00" fill="none" stroke="#8e8e8e" stroke-width="0.8"/><path d="M747.60 113.60V106.00H755.20" fill="none" stroke="#5c5c5c" stroke-width="0.8"/><path d="M746.80 114.00H755.60V105.20" fill="none" stroke="#fff" stroke-width="0.8"/><path d="M747.60 113.20H754.80V106.00" fill="none" stroke="#e3e3e3" stroke-width="0.8"/>
<g filter="url(#nf)"><text x="588.5" y="132.25" font-size="10.1" fill="#000" textLength="13.5" lengthAdjust="spacingAndGlyphs" >G =</text></g>
<rect x="628.0" y="120.62" width="86.20" height="16.80" fill="#fff"/><path d="M628.4 137.42V121.02000000000001H714.2" fill="none" stroke="#a0a0a0" stroke-width="0.8"/><path d="M629.2 136.61999999999998V121.82000000000001H713.4000000000001" fill="none" stroke="#696969" stroke-width="0.8"/><path d="M628.4 137.01999999999998H713.8000000000001V121.02000000000001" fill="none" stroke="#fff" stroke-width="0.8"/><path d="M629.2 136.22H713.0V121.82000000000001" fill="none" stroke="#e3e3e3" stroke-width="0.8"/>
<g filter="url(#nf)"><text x="630.8" y="132.2" font-size="10.1" fill="#6d6d6d" textLength="22.3" lengthAdjust="spacingAndGlyphs" >88,45</text></g>
<g filter="url(#nf)"><text x="720.8" y="132.25" font-size="10.1" fill="#000" textLength="17.8" lengthAdjust="spacingAndGlyphs" >kg/m</text></g>
<rect x="746.40" y="122.07" width="9.6" height="9.6" fill="#fff"/><path d="M746.80 131.67V122.47H756.00" fill="none" stroke="#8e8e8e" stroke-width="0.8"/><path d="M747.60 130.87V123.27H755.20" fill="none" stroke="#5c5c5c" stroke-width="0.8"/><path d="M746.80 131.27H755.60V122.47" fill="none" stroke="#fff" stroke-width="0.8"/><path d="M747.60 130.47H754.80V123.27" fill="none" stroke="#e3e3e3" stroke-width="0.8"/>
<g filter="url(#nf)"><text x="588.5" y="151.99" font-size="10.1" fill="#000" textLength="13.9" lengthAdjust="spacingAndGlyphs" >Iy =</text></g>
<rect x="628.0" y="140.44" width="86.20" height="16.80" fill="#fff"/><path d="M628.4 157.24V140.84H714.2" fill="none" stroke="#a0a0a0" stroke-width="0.8"/><path d="M629.2 156.44V141.64H713.4000000000001" fill="none" stroke="#696969" stroke-width="0.8"/><path d="M628.4 156.84H713.8000000000001V140.84" fill="none" stroke="#fff" stroke-width="0.8"/><path d="M629.2 156.04000000000002H713.0V141.64" fill="none" stroke="#e3e3e3" stroke-width="0.8"/>
<g filter="url(#nf)"><text x="630.8" y="152.04" font-size="10.1" fill="#6d6d6d" textLength="56.5" lengthAdjust="spacingAndGlyphs" >182851616,25</text></g>
<g filter="url(#nf)"><text x="720.8" y="151.99" font-size="10.1" fill="#000" textLength="12.5" lengthAdjust="spacingAndGlyphs" >mm</text></g>
<g filter="url(#nf)"><text x="734.0" y="148.19" font-size="8.2" fill="#000" textLength="4.4" lengthAdjust="spacingAndGlyphs" >4</text></g>
<rect x="746.40" y="141.89" width="9.6" height="9.6" fill="#fff"/><path d="M746.80 151.49V142.29H756.00" fill="none" stroke="#8e8e8e" stroke-width="0.8"/><path d="M747.60 150.69V143.09H755.20" fill="none" stroke="#5c5c5c" stroke-width="0.8"/><path d="M746.80 151.09H755.60V142.29" fill="none" stroke="#fff" stroke-width="0.8"/><path d="M747.60 150.29H754.80V143.09" fill="none" stroke="#e3e3e3" stroke-width="0.8"/>
<g filter="url(#nf)"><text x="588.5" y="171.74" font-size="10.1" fill="#000" textLength="13.9" lengthAdjust="spacingAndGlyphs" >Iz =</text></g>
<rect x="628.0" y="160.26" width="86.20" height="16.80" fill="#fff"/><path d="M628.4 177.06V160.66H714.2" fill="none" stroke="#a0a0a0" stroke-width="0.8"/><path d="M629.2 176.26V161.45999999999998H713.4000000000001" fill="none" stroke="#696969" stroke-width="0.8"/><path d="M628.4 176.66H713.8000000000001V160.66" fill="none" stroke="#fff" stroke-width="0.8"/><path d="M629.2 175.86H713.0V161.45999999999998" fill="none" stroke="#e3e3e3" stroke-width="0.8"/>
<g filter="url(#nf)"><text x="630.8" y="171.89" font-size="10.1" fill="#6d6d6d" textLength="51.2" lengthAdjust="spacingAndGlyphs" >63099508,71</text></g>
<g filter="url(#nf)"><text x="720.8" y="171.74" font-size="10.1" fill="#000" textLength="12.5" lengthAdjust="spacingAndGlyphs" >mm</text></g>
<g filter="url(#nf)"><text x="734.0" y="167.94" font-size="8.2" fill="#000" textLength="4.4" lengthAdjust="spacingAndGlyphs" >4</text></g>
<rect x="746.40" y="161.71" width="9.6" height="9.6" fill="#fff"/><path d="M746.80 171.31V162.11H756.00" fill="none" stroke="#8e8e8e" stroke-width="0.8"/><path d="M747.60 170.51V162.91H755.20" fill="none" stroke="#5c5c5c" stroke-width="0.8"/><path d="M746.80 170.91H755.60V162.11" fill="none" stroke="#fff" stroke-width="0.8"/><path d="M747.60 170.11H754.80V162.91" fill="none" stroke="#e3e3e3" stroke-width="0.8"/>
<g filter="url(#nf)"><text x="588.5" y="191.48" font-size="10.1" fill="#000" textLength="20.6" lengthAdjust="spacingAndGlyphs" >Wy =</text></g>
<rect x="628.0" y="180.08" width="86.20" height="16.80" fill="#fff"/><path d="M628.4 196.88V180.48000000000002H714.2" fill="none" stroke="#a0a0a0" stroke-width="0.8"/><path d="M629.2 196.07999999999998V181.28H713.4000000000001" fill="none" stroke="#696969" stroke-width="0.8"/><path d="M628.4 196.48H713.8000000000001V180.48000000000002" fill="none" stroke="#fff" stroke-width="0.8"/><path d="M629.2 195.68H713.0V181.28" fill="none" stroke="#e3e3e3" stroke-width="0.8"/>
<g filter="url(#nf)"><text x="630.8" y="191.73" font-size="10.1" fill="#6d6d6d" textLength="46.8" lengthAdjust="spacingAndGlyphs" >1261045,63</text></g>
<g filter="url(#nf)"><text x="720.8" y="191.48" font-size="10.1" fill="#000" textLength="12.5" lengthAdjust="spacingAndGlyphs" >mm</text></g>
<g filter="url(#nf)"><text x="733.5" y="188.88" font-size="6.2" fill="#000" textLength="2.7" lengthAdjust="spacingAndGlyphs" >3</text></g>
<rect x="746.40" y="181.53" width="9.6" height="9.6" fill="#fff"/><path d="M746.80 191.13V181.93H756.00" fill="none" stroke="#8e8e8e" stroke-width="0.8"/><path d="M747.60 190.33V182.73H755.20" fill="none" stroke="#5c5c5c" stroke-width="0.8"/><path d="M746.80 190.73H755.60V181.93" fill="none" stroke="#fff" stroke-width="0.8"/><path d="M747.60 189.93H754.80V182.73" fill="none" stroke="#e3e3e3" stroke-width="0.8"/>
<g filter="url(#nf)"><text x="588.5" y="211.23" font-size="10.1" fill="#000" textLength="20.6" lengthAdjust="spacingAndGlyphs" >Wz =</text></g>
<rect x="628.0" y="199.9" width="86.20" height="16.80" fill="#fff"/><path d="M628.4 216.7V200.3H714.2" fill="none" stroke="#a0a0a0" stroke-width="0.8"/><path d="M629.2 215.89999999999998V201.1H713.4000000000001" fill="none" stroke="#696969" stroke-width="0.8"/><path d="M628.4 216.29999999999998H713.8000000000001V200.3" fill="none" stroke="#fff" stroke-width="0.8"/><path d="M629.2 215.5H713.0V201.1" fill="none" stroke="#e3e3e3" stroke-width="0.8"/>
<g filter="url(#nf)"><text x="630.8" y="211.58" font-size="10.1" fill="#6d6d6d" textLength="41.9" lengthAdjust="spacingAndGlyphs" >420663,39</text></g>
<g filter="url(#nf)"><text x="720.8" y="211.23" font-size="10.1" fill="#000" textLength="12.5" lengthAdjust="spacingAndGlyphs" >mm</text></g>
<g filter="url(#nf)"><text x="733.5" y="208.63" font-size="6.2" fill="#000" textLength="2.7" lengthAdjust="spacingAndGlyphs" >3</text></g>
<rect x="746.40" y="201.35" width="9.6" height="9.6" fill="#fff"/><path d="M746.80 210.95V201.75H756.00" fill="none" stroke="#8e8e8e" stroke-width="0.8"/><path d="M747.60 210.15V202.55H755.20" fill="none" stroke="#5c5c5c" stroke-width="0.8"/><path d="M746.80 210.55H755.60V201.75" fill="none" stroke="#fff" stroke-width="0.8"/><path d="M747.60 209.75H754.80V202.55" fill="none" stroke="#e3e3e3" stroke-width="0.8"/>
<g filter="url(#nf)"><text x="588.5" y="230.98" font-size="10.1" fill="#000" textLength="29.7" lengthAdjust="spacingAndGlyphs" >Wpl,y =</text></g>
<rect x="628.0" y="219.72" width="86.20" height="16.80" fill="#fff"/><path d="M628.4 236.52V220.12H714.2" fill="none" stroke="#a0a0a0" stroke-width="0.8"/><path d="M629.2 235.72V220.92H713.4000000000001" fill="none" stroke="#696969" stroke-width="0.8"/><path d="M628.4 236.12H713.8000000000001V220.12" fill="none" stroke="#fff" stroke-width="0.8"/><path d="M629.2 235.32000000000002H713.0V220.92" fill="none" stroke="#e3e3e3" stroke-width="0.8"/>
<g filter="url(#nf)"><text x="630.8" y="231.43" font-size="10.1" fill="#6d6d6d" textLength="46.8" lengthAdjust="spacingAndGlyphs" >1385051,15</text></g>
<g filter="url(#nf)"><text x="720.8" y="230.98" font-size="10.1" fill="#000" textLength="12.5" lengthAdjust="spacingAndGlyphs" >mm</text></g>
<g filter="url(#nf)"><text x="733.5" y="228.38" font-size="6.2" fill="#000" textLength="2.7" lengthAdjust="spacingAndGlyphs" >3</text></g>
<rect x="746.40" y="221.17" width="9.6" height="9.6" fill="#fff"/><path d="M746.80 230.77V221.57H756.00" fill="none" stroke="#8e8e8e" stroke-width="0.8"/><path d="M747.60 229.97V222.37H755.20" fill="none" stroke="#5c5c5c" stroke-width="0.8"/><path d="M746.80 230.37H755.60V221.57" fill="none" stroke="#fff" stroke-width="0.8"/><path d="M747.60 229.57H754.80V222.37" fill="none" stroke="#e3e3e3" stroke-width="0.8"/>
<g filter="url(#nf)"><text x="588.5" y="250.72" font-size="10.1" fill="#000" textLength="29.7" lengthAdjust="spacingAndGlyphs" >Wpl,z =</text></g>
<rect x="628.0" y="239.54" width="86.20" height="16.80" fill="#fff"/><path d="M628.4 256.34V239.94H714.2" fill="none" stroke="#a0a0a0" stroke-width="0.8"/><path d="M629.2 255.53999999999996V240.73999999999998H713.4000000000001" fill="none" stroke="#696969" stroke-width="0.8"/><path d="M628.4 255.93999999999997H713.8000000000001V239.94" fill="none" stroke="#fff" stroke-width="0.8"/><path d="M629.2 255.14H713.0V240.73999999999998" fill="none" stroke="#e3e3e3" stroke-width="0.8"/>
<g filter="url(#nf)"><text x="630.8" y="251.27" font-size="10.1" fill="#6d6d6d" textLength="41.9" lengthAdjust="spacingAndGlyphs" >641372,82</text></g>
<g filter="url(#nf)"><text x="720.8" y="250.72" font-size="10.1" fill="#000" textLength="12.5" lengthAdjust="spacingAndGlyphs" >mm</text></g>
<g filter="url(#nf)"><text x="733.5" y="248.12" font-size="6.2" fill="#000" textLength="2.7" lengthAdjust="spacingAndGlyphs" >3</text></g>
<rect x="746.40" y="240.99" width="9.6" height="9.6" fill="#fff"/><path d="M746.80 250.59V241.39H756.00" fill="none" stroke="#8e8e8e" stroke-width="0.8"/><path d="M747.60 249.79V242.19H755.20" fill="none" stroke="#5c5c5c" stroke-width="0.8"/><path d="M746.80 250.19H755.60V241.39" fill="none" stroke="#fff" stroke-width="0.8"/><path d="M747.60 249.39H754.80V242.19" fill="none" stroke="#e3e3e3" stroke-width="0.8"/>
<g filter="url(#nf)"><text x="588.5" y="270.47" font-size="10.1" fill="#000" textLength="13.1" lengthAdjust="spacingAndGlyphs" >iy =</text></g>
<rect x="628.0" y="259.36" width="86.20" height="16.80" fill="#fff"/><path d="M628.4 276.16V259.76H714.2" fill="none" stroke="#a0a0a0" stroke-width="0.8"/><path d="M629.2 275.36V260.56H713.4000000000001" fill="none" stroke="#696969" stroke-width="0.8"/><path d="M628.4 275.76000000000005H713.8000000000001V259.76" fill="none" stroke="#fff" stroke-width="0.8"/><path d="M629.2 274.96000000000004H713.0V260.56" fill="none" stroke="#e3e3e3" stroke-width="0.8"/>
<g filter="url(#nf)"><text x="630.8" y="271.12" font-size="10.1" fill="#6d6d6d" textLength="27.2" lengthAdjust="spacingAndGlyphs" >127,39</text></g>
<g filter="url(#nf)"><text x="720.8" y="270.47" font-size="10.1" fill="#000" textLength="12.5" lengthAdjust="spacingAndGlyphs" >mm</text></g>
<rect x="746.40" y="260.81" width="9.6" height="9.6" fill="#fff"/><path d="M746.80 270.41V261.21H756.00" fill="none" stroke="#8e8e8e" stroke-width="0.8"/><path d="M747.60 269.61V262.01H755.20" fill="none" stroke="#5c5c5c" stroke-width="0.8"/><path d="M746.80 270.01H755.60V261.21" fill="none" stroke="#fff" stroke-width="0.8"/><path d="M747.60 269.21H754.80V262.01" fill="none" stroke="#e3e3e3" stroke-width="0.8"/>
<g filter="url(#nf)"><text x="588.5" y="290.21" font-size="10.1" fill="#000" textLength="13.1" lengthAdjust="spacingAndGlyphs" >iz =</text></g>
<rect x="628.0" y="279.18" width="86.20" height="16.80" fill="#fff"/><path d="M628.4 295.98V279.58H714.2" fill="none" stroke="#a0a0a0" stroke-width="0.8"/><path d="M629.2 295.18V280.38H713.4000000000001" fill="none" stroke="#696969" stroke-width="0.8"/><path d="M628.4 295.58000000000004H713.8000000000001V279.58" fill="none" stroke="#fff" stroke-width="0.8"/><path d="M629.2 294.78000000000003H713.0V280.38" fill="none" stroke="#e3e3e3" stroke-width="0.8"/>
<g filter="url(#nf)"><text x="630.8" y="290.96" font-size="10.1" fill="#6d6d6d" textLength="22.3" lengthAdjust="spacingAndGlyphs" >74,83</text></g>
<g filter="url(#nf)"><text x="720.8" y="290.21" font-size="10.1" fill="#000" textLength="12.5" lengthAdjust="spacingAndGlyphs" >mm</text></g>
<rect x="746.40" y="280.63" width="9.6" height="9.6" fill="#fff"/><path d="M746.80 290.23V281.03H756.00" fill="none" stroke="#8e8e8e" stroke-width="0.8"/><path d="M747.60 289.43V281.83H755.20" fill="none" stroke="#5c5c5c" stroke-width="0.8"/><path d="M746.80 289.83H755.60V281.03" fill="none" stroke="#fff" stroke-width="0.8"/><path d="M747.60 289.03H754.80V281.83" fill="none" stroke="#e3e3e3" stroke-width="0.8"/>
<g filter="url(#nf)"><text x="588.5" y="309.96" font-size="10.1" fill="#000" textLength="22.6" lengthAdjust="spacingAndGlyphs" >Avz =</text></g>
<rect x="628.0" y="299.0" width="86.20" height="16.80" fill="#fff"/><path d="M628.4 315.8V299.4H714.2" fill="none" stroke="#a0a0a0" stroke-width="0.8"/><path d="M629.2 315.0V300.2H713.4000000000001" fill="none" stroke="#696969" stroke-width="0.8"/><path d="M628.4 315.40000000000003H713.8000000000001V299.4" fill="none" stroke="#fff" stroke-width="0.8"/><path d="M629.2 314.6H713.0V300.2" fill="none" stroke="#e3e3e3" stroke-width="0.8"/>
<g filter="url(#nf)"><text x="630.8" y="310.81" font-size="10.1" fill="#6d6d6d" textLength="32.1" lengthAdjust="spacingAndGlyphs" >3742,47</text></g>
<g filter="url(#nf)"><text x="720.8" y="309.96" font-size="10.1" fill="#000" textLength="12.5" lengthAdjust="spacingAndGlyphs" >mm</text></g>
<g filter="url(#nf)"><text x="733.5" y="307.36" font-size="6.2" fill="#000" textLength="2.7" lengthAdjust="spacingAndGlyphs" >2</text></g>
<rect x="746.40" y="300.45" width="9.6" height="9.6" fill="#fff"/><path d="M746.80 310.05V300.85H756.00" fill="none" stroke="#8e8e8e" stroke-width="0.8"/><path d="M747.60 309.25V301.65H755.20" fill="none" stroke="#5c5c5c" stroke-width="0.8"/><path d="M746.80 309.65H755.60V300.85" fill="none" stroke="#fff" stroke-width="0.8"/><path d="M747.60 308.85H754.80V301.65" fill="none" stroke="#e3e3e3" stroke-width="0.8"/>
<g filter="url(#nf)"><text x="588.5" y="329.71" font-size="10.1" fill="#000" textLength="22.6" lengthAdjust="spacingAndGlyphs" >Avy =</text></g>
<rect x="628.0" y="318.82" width="86.20" height="16.80" fill="#fff"/><path d="M628.4 335.62V319.21999999999997H714.2" fill="none" stroke="#a0a0a0" stroke-width="0.8"/><path d="M629.2 334.82V320.02H713.4000000000001" fill="none" stroke="#696969" stroke-width="0.8"/><path d="M628.4 335.22H713.8000000000001V319.21999999999997" fill="none" stroke="#fff" stroke-width="0.8"/><path d="M629.2 334.42H713.0V320.02" fill="none" stroke="#e3e3e3" stroke-width="0.8"/>
<g filter="url(#nf)"><text x="630.8" y="330.66" font-size="10.1" fill="#6d6d6d" textLength="32.1" lengthAdjust="spacingAndGlyphs" >9380,47</text></g>
<g filter="url(#nf)"><text x="720.8" y="329.71" font-size="10.1" fill="#000" textLength="12.5" lengthAdjust="spacingAndGlyphs" >mm</text></g>
<g filter="url(#nf)"><text x="733.5" y="327.11" font-size="6.2" fill="#000" textLength="2.7" lengthAdjust="spacingAndGlyphs" >2</text></g>
<rect x="746.40" y="320.27" width="9.6" height="9.6" fill="#fff"/><path d="M746.80 329.87V320.67H756.00" fill="none" stroke="#8e8e8e" stroke-width="0.8"/><path d="M747.60 329.07V321.47H755.20" fill="none" stroke="#5c5c5c" stroke-width="0.8"/><path d="M746.80 329.47H755.60V320.67" fill="none" stroke="#fff" stroke-width="0.8"/><path d="M747.60 328.67H754.80V321.47" fill="none" stroke="#e3e3e3" stroke-width="0.8"/>
<g filter="url(#nf)"><text x="588.5" y="349.45" font-size="10.1" fill="#000" textLength="15.6" lengthAdjust="spacingAndGlyphs" >IT =</text></g>
<rect x="628.0" y="338.64" width="86.20" height="16.80" fill="#fff"/><path d="M628.4 355.44V339.03999999999996H714.2" fill="none" stroke="#a0a0a0" stroke-width="0.8"/><path d="M629.2 354.64V339.84H713.4000000000001" fill="none" stroke="#696969" stroke-width="0.8"/><path d="M628.4 355.04H713.8000000000001V339.03999999999996" fill="none" stroke="#fff" stroke-width="0.8"/><path d="M629.2 354.24H713.0V339.84" fill="none" stroke="#e3e3e3" stroke-width="0.8"/>
<g filter="url(#nf)"><text x="630.8" y="350.5" font-size="10.1" fill="#6d6d6d" textLength="46.8" lengthAdjust="spacingAndGlyphs" >1659955,90</text></g>
<g filter="url(#nf)"><text x="720.8" y="349.45" font-size="10.1" fill="#000" textLength="12.5" lengthAdjust="spacingAndGlyphs" >mm</text></g>
<g filter="url(#nf)"><text x="734.0" y="345.65" font-size="8.2" fill="#000" textLength="4.4" lengthAdjust="spacingAndGlyphs" >4</text></g>
<rect x="746.40" y="340.09" width="9.6" height="9.6" fill="#fff"/><path d="M746.80 349.69V340.49H756.00" fill="none" stroke="#8e8e8e" stroke-width="0.8"/><path d="M747.60 348.89V341.29H755.20" fill="none" stroke="#5c5c5c" stroke-width="0.8"/><path d="M746.80 349.29H755.60V340.49" fill="none" stroke="#fff" stroke-width="0.8"/><path d="M747.60 348.49H754.80V341.29" fill="none" stroke="#e3e3e3" stroke-width="0.8"/>
<rect x="595.6" y="426.7" width="146.10" height="27.20" fill="#f0f0f0"/><path d="M596.0 453.5V427.09999999999997H741.3000000000001" fill="none" stroke="#fff" stroke-width="0.8"/><path d="M595.6 453.5H741.3000000000001V426.7" fill="none" stroke="#696969" stroke-width="0.8"/><path d="M596.4 452.7H740.5V427.5" fill="none" stroke="#a0a0a0" stroke-width="0.8"/><g filter="url(#nf)"><text x="668.6500000000001" y="443.35" font-size="10.1" fill="#000" textLength="81.5" lengthAdjust="spacingAndGlyphs" text-anchor="middle" >Interaction diagram...</text></g>
<rect x="595.6" y="459.8" width="146.10" height="27.20" fill="#f0f0f0"/><path d="M596.0 486.6V460.2H741.3000000000001" fill="none" stroke="#fff" stroke-width="0.8"/><path d="M595.6 486.6H741.3000000000001V459.8" fill="none" stroke="#696969" stroke-width="0.8"/><path d="M596.4 485.8H740.5V460.6" fill="none" stroke="#a0a0a0" stroke-width="0.8"/><g filter="url(#nf)"><text x="668.6500000000001" y="476.45" font-size="10.1" fill="#000" textLength="72" lengthAdjust="spacingAndGlyphs" text-anchor="middle" >Imposed classes...</text></g>
<rect x="740.3" y="84.2" width="22.5" height="273.8" fill="none" stroke="#ed1c24" stroke-width="4.1"/>
<path d="M745.3 31.5H758.2V52.9H762.5L751.7 72.6L740.9 52.9H745.3z" fill="none" stroke="#ed1c24" stroke-width="3.25" stroke-linejoin="miter" stroke-miterlimit="10"/>
<!-- status -->
<path d="M1 493.7H766.8" stroke="#f9f9f9" stroke-width="1.6"/>
<path d="M766.3 25.3V508.4" stroke="#fbfbfb" stroke-width="0.9"/>
<path d="M1.5 508.4V495.5H123.9" fill="none" stroke="#a0a0a0" stroke-width="0.85"/><path d="M123.9 496.0V508.4" fill="none" stroke="#fff" stroke-width="0.9"/>
<path d="M126.6 508.4V495.5H766.2" fill="none" stroke="#a0a0a0" stroke-width="0.85"/><path d="M766.2 496.0V508.4" fill="none" stroke="#fff" stroke-width="0.9"/>
<g filter="url(#nf)"><text x="10.4" y="505.5" font-size="10.4" fill="#000" textLength="103.8" lengthAdjust="spacingAndGlyphs" stroke="#000" stroke-width="0.18">(363,67 mm,147,79 mm)</text></g>
<path d="M763.4 508.4L766.6 505.2" stroke="#9a9a9a" stroke-width="1"/>
<path d="M760.3 508.4L766.6 502.1" stroke="#9a9a9a" stroke-width="1"/>
<path d="M757.2 508.4L766.6 499.0" stroke="#9a9a9a" stroke-width="1"/>
</svg></body></html>
